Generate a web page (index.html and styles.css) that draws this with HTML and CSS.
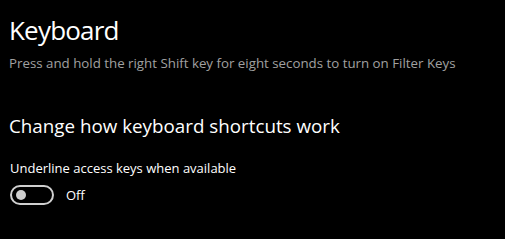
FILE: index.html
```html
<!DOCTYPE html>
<html lang="en">
<head>
    <meta charset="UTF-8">
    <title>Keyboard</title>
    <link rel="stylesheet" href="styles.css">
</head>
<body>
    <div class="page">
        <h1 class="title">Keyboard</h1>
        <p class="hint">Press and hold the right Shift key for eight seconds to turn on Filter Keys</p>

        <h2 class="section">Change how keyboard shortcuts work</h2>
        <div class="setting">
            <span class="label">Underline access keys when available</span>
            <div class="toggle-row">
                <div class="toggle"><span class="knob"></span></div>
                <span class="state">Off</span>
            </div>
        </div>
    </div>
</body>
</html>
```

FILE: styles.css
```css
*{
    margin: 0;
    padding: 0;
    box-sizing: border-box;
}
html, body{
    background: #000;
    color: #fff;
    font-family: "Open Sans", "Noto Sans", sans-serif;
}
.page{
    padding: 13px 10px 0 9px;
}
.title{
    font-size: 26px;
    font-weight: 400;
    line-height: 34px;
    letter-spacing: -0.8px;
}
.hint{
    margin-top: 7px;
    font-size: 13.3px;
    line-height: 18px;
    color: #a0a0a0;
}
.section{
    margin-top: 41px;
    font-size: 18.8px;
    font-weight: 400;
    line-height: 26px;
}
.setting{
    margin-top: 20px;
}
.label{
    display: block;
    font-size: 13px;
    line-height: 18px;
    padding-left: 1px;
}
.toggle-row{
    display: flex;
    align-items: center;
    margin-top: 8px;
    padding-left: 1px;
}
.toggle{
    width: 44px;
    height: 20px;
    border: 2px solid #cfcfcf;
    border-radius: 10px;
    display: flex;
    align-items: center;
    padding-left: 4px;
}
.knob{
    width: 10px;
    height: 10px;
    border-radius: 50%;
    background: #cfcfcf;
}
.state{
    margin-left: 12px;
    font-size: 13px;
}
```
